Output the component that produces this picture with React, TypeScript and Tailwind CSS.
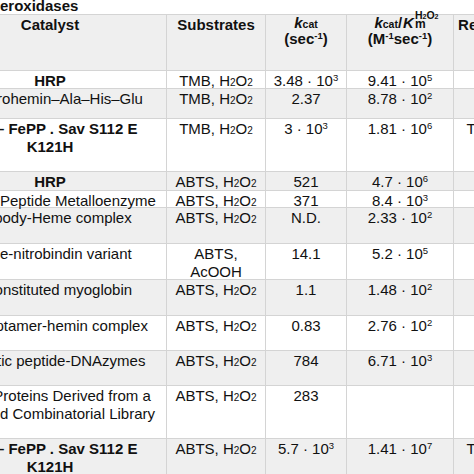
import type { ReactNode } from 'react';

const Sup = ({ children }: { children: ReactNode }) => (
    <sup className="relative -top-[5px] align-baseline text-[9.5px] leading-none">{children}</sup>
);

const H2O2 = () => (
    <>
        H<span className="text-[10px]">2</span>O<span className="text-[10px]">2</span>
    </>
);

const Pow = ({ base, exp }: { base: string; exp: number }) => (
    <>
        {base} · 10<Sup>{exp}</Sup>
    </>
);

type Row = {
    catalyst: ReactNode;
    bold?: boolean;
    substrate: ReactNode;
    kcat: ReactNode;
    eff: ReactNode;
    ref?: string;
    height: string;
    gray?: boolean;
};

const fepp = (
    <>
        Biot – FePP . Sav S112 E
        <br />
        K121H
    </>
);

const abts = (
    <>
        ABTS, <H2O2 />
    </>
);

const tmb = (
    <>
        TMB, <H2O2 />
    </>
);

const rows: Row[] = [
    { catalyst: 'HRP', bold: true, substrate: tmb, kcat: <Pow base="3.48" exp={3} />, eff: <Pow base="9.41" exp={5} />, height: 'h-[18px]' },
    { catalyst: 'Deuterohemin\u2013Ala\u2013His\u2013Glu', substrate: tmb, kcat: '2.37', eff: <Pow base="8.78" exp={2} />, height: 'h-[30px]', gray: true },
    { catalyst: fepp, bold: true, substrate: tmb, kcat: <Pow base="3" exp={3} />, eff: <Pow base="1.81" exp={6} />, ref: 'This work', height: 'h-[53px]' },
    { catalyst: 'HRP', bold: true, substrate: abts, kcat: '521', eff: <Pow base="4.7" exp={6} />, height: 'h-[19px]', gray: true },
    { catalyst: 'Mimetic Peptide Metalloenzyme', substrate: abts, kcat: '371', eff: <Pow base="8.4" exp={3} />, height: 'h-[17px]' },
    { catalyst: 'Antibody-Heme complex', substrate: abts, kcat: 'N.D.', eff: <Pow base="2.33" exp={2} />, height: 'h-[36px]', gray: true },
    {
        catalyst: 'Heme-nitrobindin variant',
        substrate: (
            <>
                ABTS,
                <br />
                AcOOH
            </>
        ),
        kcat: '14.1',
        eff: <Pow base="5.2" exp={5} />,
        height: 'h-[36px]',
    },
    { catalyst: 'Reconstituted myoglobin', substrate: abts, kcat: '1.1', eff: <Pow base="1.48" exp={2} />, height: 'h-[36px]', gray: true },
    { catalyst: 'DNA aptamer-hemin complex', substrate: abts, kcat: '0.83', eff: <Pow base="2.76" exp={2} />, height: 'h-[35px]' },
    { catalyst: 'Catalytic peptide-DNAzymes', substrate: abts, kcat: '784', eff: <Pow base="6.71" exp={3} />, height: 'h-[35px]', gray: true },
    {
        catalyst: (
            <>
                Heme Proteins Derived from a
                <br />
                Designed Combinatorial Library
            </>
        ),
        substrate: abts,
        kcat: '283',
        eff: '',
        height: 'h-[53px]',
    },
    { catalyst: fepp, bold: true, substrate: abts, kcat: <Pow base="5.7" exp={3} />, eff: <Pow base="1.41" exp={7} />, ref: 'This work', height: 'h-[60px]', gray: true },
];

const cols = 'grid grid-cols-[233px_99px_81px_107px_90px]';
const cell = 'border-r border-[#d4d4d4] pt-[1px] text-center';

export default function App() {
    return (
        <div
            className="w-[474px] h-[474px] overflow-hidden bg-white text-[#111] text-[15px] leading-[17.5px]"
            style={{ fontFamily: '"Liberation Sans", Arial, sans-serif' }}
        >
            <div className="-ml-[66px] w-[610px]">
                {/* Title, cropped at the left edge */}
                <div className="-mt-[3px] h-[17px] ml-[56px] font-bold leading-[17px]">Peroxidases</div>

                <div className="border-t border-[#d4d4d4]">
                    {/* Header */}
                    <div className={`${cols} h-[56px] border-b border-[#d4d4d4] bg-[#efefef] font-bold`}>
                        <div className={cell}>Catalyst</div>
                        <div className={cell}>Substrates</div>
                        <div className={`${cell} leading-[14.5px]`}>
                            <i>k</i>
                            <span className="text-[10.5px]">cat</span>
                            <br />
                            (sec<Sup>-1</Sup>)
                        </div>
                        <div className={`${cell} leading-[14.5px]`}>
                            <i>k</i>
                            <span className="text-[10.5px]">cat</span>/<i className="ml-[1px]">K</i>
                            <span className="relative ml-[1px] text-[12px]">
                                m
                                <span className="absolute left-0 -top-[7px] text-[10.5px] leading-[10px] whitespace-nowrap">
                                    H<span className="text-[7px]">2</span>O<span className="text-[7px]">2</span>
                                </span>
                            </span>
                            <br />
                            (M<Sup>-1</Sup>sec<Sup>-1</Sup>)
                        </div>
                        <div className={cell}>References</div>
                    </div>

                    {rows.map((row, i) => (
                        <div
                            key={i}
                            className={`${cols} ${row.height} border-b border-[#d4d4d4] ${row.gray ? 'bg-[#efefef]' : 'bg-white'}`}
                        >
                            <div className={`${cell} ${row.bold ? 'font-bold' : ''}`}>{row.catalyst}</div>
                            <div className={cell}>{row.substrate}</div>
                            <div className={cell}>{row.kcat}</div>
                            <div className={cell}>{row.eff}</div>
                            <div className={cell}>{row.ref}</div>
                        </div>
                    ))}
                </div>
            </div>
        </div>
    );
}
